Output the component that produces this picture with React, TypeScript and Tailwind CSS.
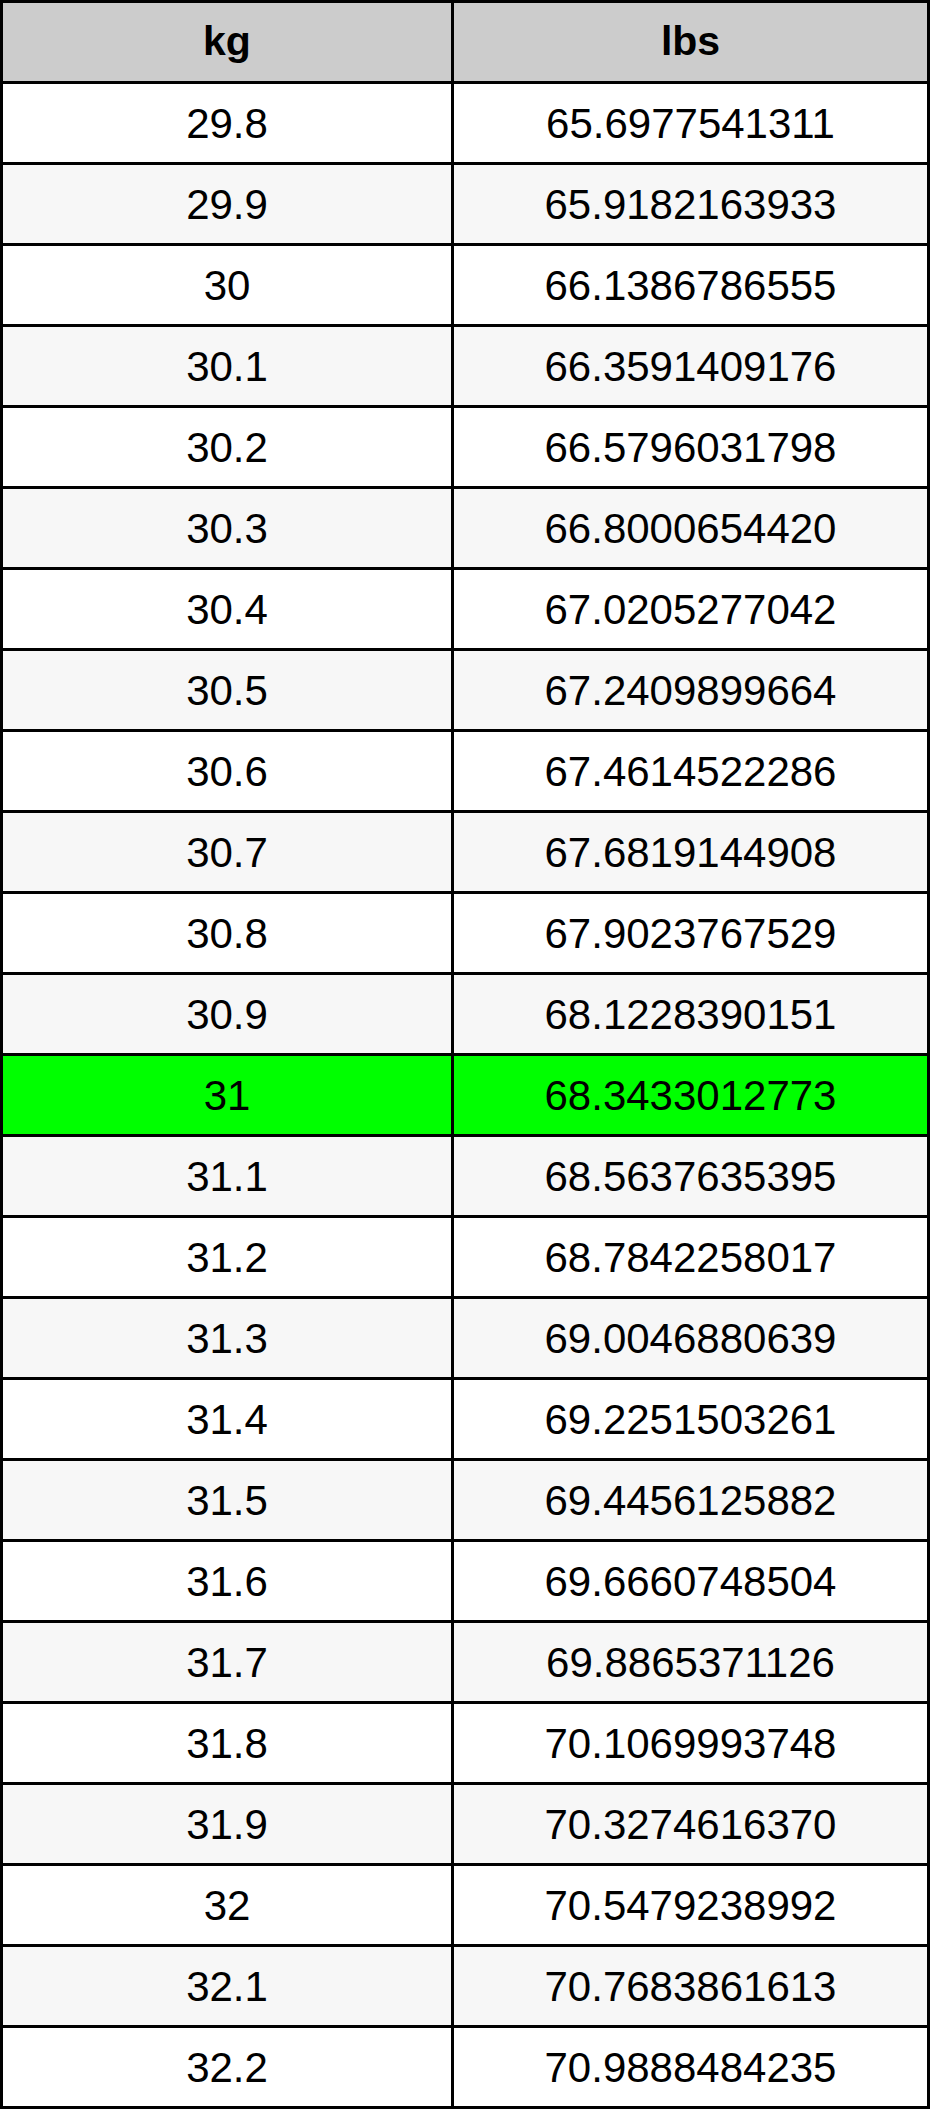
const rows: [string, string][] = [
  ['29.8', '65.6977541311'],
  ['29.9', '65.9182163933'],
  ['30', '66.1386786555'],
  ['30.1', '66.3591409176'],
  ['30.2', '66.5796031798'],
  ['30.3', '66.8000654420'],
  ['30.4', '67.0205277042'],
  ['30.5', '67.2409899664'],
  ['30.6', '67.4614522286'],
  ['30.7', '67.6819144908'],
  ['30.8', '67.9023767529'],
  ['30.9', '68.1228390151'],
  ['31', '68.3433012773'],
  ['31.1', '68.5637635395'],
  ['31.2', '68.7842258017'],
  ['31.3', '69.0046880639'],
  ['31.4', '69.2251503261'],
  ['31.5', '69.4456125882'],
  ['31.6', '69.6660748504'],
  ['31.7', '69.8865371126'],
  ['31.8', '70.1069993748'],
  ['31.9', '70.3274616370'],
  ['32', '70.5479238992'],
  ['32.1', '70.7683861613'],
  ['32.2', '70.9888484235'],
]

export default function App() {
  return (
    <div className="w-[930px] h-[2115px] bg-white font-['Liberation_Sans',Arial,sans-serif] text-black">
      <div className="border-[3px] border-b-0 border-black">
        {/* header */}
        <div className="flex h-[81px] border-b-[3px] border-black bg-[#cccccc] font-bold text-[41px]">
          <div className="w-[448px] flex items-center justify-center border-r-[3px] border-black box-content">kg</div>
          <div className="flex-1 flex items-center justify-center">lbs</div>
        </div>
        {rows.map(([kg, lbs], i) => {
          const bg = kg === '31' ? 'bg-[#00ff00]' : i % 2 === 1 ? 'bg-[#f7f7f7]' : 'bg-white'
          return (
            <div key={kg} className={`flex h-[81px] border-b-[3px] border-black text-[42px] ${bg}`}>
              <div className="w-[448px] flex items-center justify-center border-r-[3px] border-black box-content">{kg}</div>
              <div className="flex-1 flex items-center justify-center">{lbs}</div>
            </div>
          )
        })}
      </div>
    </div>
  )
}
